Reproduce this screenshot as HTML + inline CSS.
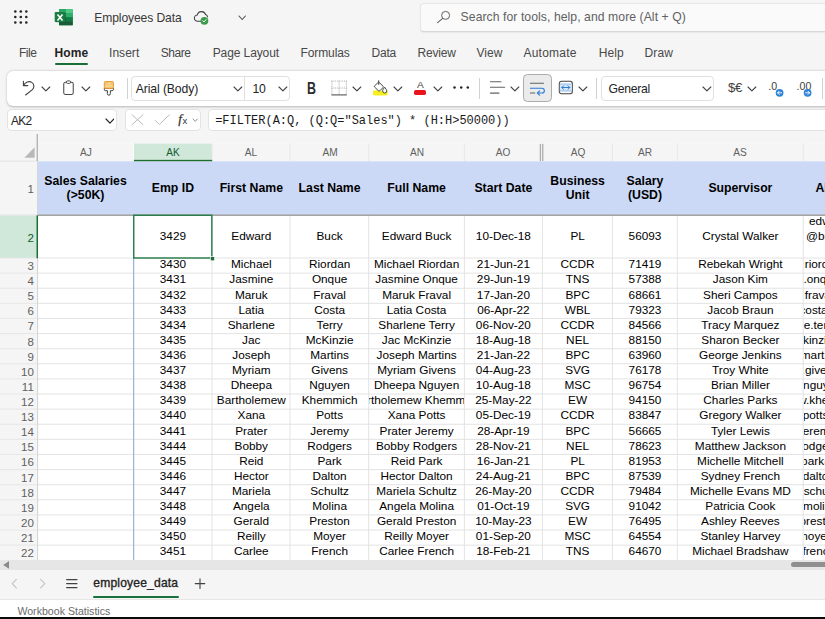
<!DOCTYPE html>
<html lang="en"><head><meta charset="utf-8"><title>Employees Data</title>
<style>
*{box-sizing:border-box;margin:0;padding:0}
html,body{width:825px;height:619px;overflow:hidden;background:#f5f5f5;font-family:"Liberation Sans",sans-serif;color:#242424}
#app{position:relative;width:825px;height:619px;overflow:hidden;background:#f5f5f5}
.abs{position:absolute}
.ui{font-family:"Liberation Sans",sans-serif;color:#242424;white-space:nowrap}
.cell{position:absolute;overflow:hidden;color:#000;font-size:11.8px;line-height:14px}
.cell span{position:absolute;white-space:nowrap;transform:translateX(-50%);text-align:center}
.ch{position:absolute;top:145.1px;height:14px;line-height:14px;text-align:center;font-size:11.5px;color:#616161;transform:translateX(-50%) scaleX(.88);white-space:nowrap}
.rn{position:absolute;left:0;width:33.8px;text-align:right;font-size:11.5px;line-height:14px;height:14px;color:#616161;white-space:nowrap}
.vl{position:absolute;width:1px;background:#e2e2e2}
.hl{position:absolute;height:1px;background:#e2e2e2}
.hc{position:absolute;font-weight:bold;font-size:12.25px;line-height:14.6px;text-align:center;color:#000;white-space:nowrap;transform:translate(-50%,-50%)}
</style></head><body><div id="app">

<svg class="abs" style="left:0;top:0" width="40" height="35" fill="#242424"><circle cx="15.3" cy="11.5" r="1.3"/><circle cx="15.3" cy="17" r="1.3"/><circle cx="15.3" cy="22.5" r="1.3"/><circle cx="20.8" cy="11.5" r="1.3"/><circle cx="20.8" cy="17" r="1.3"/><circle cx="20.8" cy="22.5" r="1.3"/><circle cx="26.3" cy="11.5" r="1.3"/><circle cx="26.3" cy="17" r="1.3"/><circle cx="26.3" cy="22.5" r="1.3"/></svg>
<svg class="abs" style="left:54px;top:8px" width="20" height="19" viewBox="0 0 20 19">
<rect x="5" y="1.1" width="13.8" height="16.2" rx="1" fill="#21a366"/>
<rect x="5" y="1.1" width="6.9" height="4.05" fill="#2aa862"/><rect x="11.9" y="1.1" width="6.9" height="4.05" fill="#52c987"/>
<rect x="5" y="5.15" width="6.9" height="4.05" fill="#16834a"/><rect x="11.9" y="5.15" width="6.9" height="4.05" fill="#33ad6a"/>
<rect x="5" y="9.2" width="6.9" height="4.05" fill="#185c37"/><rect x="11.9" y="9.2" width="6.9" height="4.05" fill="#107c41"/>
<rect x="5" y="13.25" width="13.8" height="4.05" fill="#185c37"/>
<rect x="1.4" y="4.6" width="10.3" height="9.8" rx="1" fill="#0b4f28" opacity=".35"/><rect x="0.7" y="4.1" width="10.4" height="10" rx="1" fill="#1a7d42"/>
<path d="M3.5 6.5 L8.5 12.5 M8.5 6.5 L3.5 12.5" stroke="#fff" stroke-width="1.6" fill="none"/>
</svg>
<div class="abs ui" style="left:94.2px;top:9.6px;line-height:16px;font-size:12.1px;letter-spacing:-0.091px;color:#383838;">Employees Data</div>
<svg class="abs" style="left:192px;top:9px" width="20" height="18" viewBox="0 0 20 18">
<path d="M9.6 12.2 H5.6 A3.1 3.1 0 0 1 5.3 6 A4.3 4.3 0 0 1 13.6 5.6 A3.3 3.3 0 0 1 15.6 8" fill="none" stroke="#424242" stroke-width="1.05" stroke-linecap="round"/>
<circle cx="12.4" cy="11.8" r="3.9" fill="#3a9c4b"/>
<path d="M10.7 11.8 L11.9 13 L14.1 10.6" fill="none" stroke="#fff" stroke-width="1" stroke-linecap="round" stroke-linejoin="round"/>
</svg>
<svg class="abs" style="left:238.0px;top:14.7px" width="8.4" height="5.5" viewBox="-1 -1 8.4 5.5"><path d="M0 0 L3.20 3.50 L6.40 0" fill="none" stroke="#505050" stroke-width="1.1" stroke-linecap="round" stroke-linejoin="round"/></svg>
<div class="abs" style="left:420px;top:3px;width:420px;height:29px;background:#fafafa;border:1px solid #e6e6e6;border-bottom-color:#d6d6d6;border-radius:4px;box-shadow:0 1px 1.5px rgba(0,0,0,.06)"></div>
<svg class="abs" style="left:436px;top:10px" width="16" height="14" viewBox="0 0 16 14">
<circle cx="9.6" cy="5.4" r="4" fill="none" stroke="#616161" stroke-width="1"/><path d="M6.7 8.4 L1.6 12.6" stroke="#616161" stroke-width="1.05" stroke-linecap="round"/></svg>
<div class="abs ui" style="left:460.6px;top:9.3px;line-height:16px;font-size:12.2px;letter-spacing:0.065px;color:#616161;">Search for tools, help, and more (Alt + Q)</div>
<div class="abs ui" style="left:18.9px;top:44.6px;line-height:16px;font-size:12.0px;letter-spacing:-0.459px;color:#484848;">File</div>
<div class="abs ui" style="left:109.0px;top:44.6px;line-height:16px;font-size:12.0px;letter-spacing:0.048px;color:#484848;">Insert</div>
<div class="abs ui" style="left:160.7px;top:44.6px;line-height:16px;font-size:12.0px;letter-spacing:-0.445px;color:#484848;">Share</div>
<div class="abs ui" style="left:212.7px;top:44.6px;line-height:16px;font-size:12.0px;letter-spacing:-0.099px;color:#484848;">Page Layout</div>
<div class="abs ui" style="left:300.4px;top:44.6px;line-height:16px;font-size:12.0px;letter-spacing:-0.076px;color:#484848;">Formulas</div>
<div class="abs ui" style="left:371.6px;top:44.6px;line-height:16px;font-size:12.0px;letter-spacing:-0.237px;color:#484848;">Data</div>
<div class="abs ui" style="left:417.5px;top:44.6px;line-height:16px;font-size:12.0px;letter-spacing:-0.191px;color:#484848;">Review</div>
<div class="abs ui" style="left:476.5px;top:44.6px;line-height:16px;font-size:12.0px;letter-spacing:0.051px;color:#484848;">View</div>
<div class="abs ui" style="left:523.4px;top:44.6px;line-height:16px;font-size:12.0px;letter-spacing:0.254px;color:#484848;">Automate</div>
<div class="abs ui" style="left:598.7px;top:44.6px;line-height:16px;font-size:12.0px;letter-spacing:0.080px;color:#484848;">Help</div>
<div class="abs ui" style="left:644.6px;top:44.6px;line-height:16px;font-size:12.0px;letter-spacing:0.099px;color:#484848;">Draw</div>
<div class="abs ui" style="left:54.5px;top:44.6px;line-height:16px;font-size:12.0px;letter-spacing:0.140px;color:#242424;font-weight:bold;">Home</div>
<div class="abs" style="left:54.5px;top:63.3px;width:33.7px;height:1.8px;background:#1a6f38;border-radius:1px"></div>
<div class="abs" style="left:6.6px;top:70.7px;width:830px;height:35.3px;background:#fff;border-radius:6px 0 0 6px;box-shadow:0 .8px 2.4px rgba(0,0,0,.26)"></div>
<svg class="abs" style="left:21px;top:79px" width="16" height="18" viewBox="0 0 16 18">
<path d="M2.4 2.2 V6.6 H6.8" fill="none" stroke="#424242" stroke-width="1.1" stroke-linecap="round" stroke-linejoin="round"/>
<path d="M2.6 6.4 C4.2 3.2 8 1.6 10.8 3.4 C13.6 5.2 13.4 8.6 11.4 10.6 L4.6 16" fill="none" stroke="#424242" stroke-width="1.1" stroke-linecap="round"/></svg>
<svg class="abs" style="left:41.2px;top:85.8px" width="9.8" height="5.9" viewBox="-1 -1 9.8 5.9"><path d="M0 0 L3.90 3.90 L7.80 0" fill="none" stroke="#424242" stroke-width="1.1" stroke-linecap="round" stroke-linejoin="round"/></svg>
<svg class="abs" style="left:62px;top:79px" width="14" height="18" viewBox="0 0 14 18">
<rect x="1.75" y="3.3" width="9.5" height="12.2" rx="1.7" fill="none" stroke="#4a4a4a" stroke-width="1.05"/>
<rect x="4.3" y="1.9" width="4.4" height="2.5" rx="1.25" fill="#fff" stroke="#4a4a4a" stroke-width="1"/></svg>
<svg class="abs" style="left:81.4px;top:85.8px" width="9.8" height="5.9" viewBox="-1 -1 9.8 5.9"><path d="M0 0 L3.90 3.90 L7.80 0" fill="none" stroke="#424242" stroke-width="1.1" stroke-linecap="round" stroke-linejoin="round"/></svg>
<svg class="abs" style="left:103px;top:79.6px" width="12" height="17" viewBox="0 0 12 17">
<path d="M1.3 8.3 H10.4 V9.4 A1.3 1.3 0 0 1 9.1 10.7 H7.4 V13.7 A1.5 1.5 0 0 1 4.4 13.7 V10.7 H2.6 A1.3 1.3 0 0 1 1.3 9.4 Z" fill="#fff" stroke="#424242" stroke-width="1"/>
<rect x="1.3" y="1.5" width="9.1" height="6.9" rx="1" fill="#f5c46e" stroke="#e8932c" stroke-width=".9"/>
<path d="M2.4 4.4 H5.2 V2.6 H7.6 V4.8 H9.3 V7.2 H2.4 Z" fill="#f8d896" opacity=".8"/></svg>
<div class="abs" style="left:127.0px;top:78px;width:1px;height:20.5px;background:#d1d1d1"></div>
<div class="abs" style="left:131.3px;top:76px;width:158.5px;height:24.6px;border:1px solid #e0e0e0;border-radius:4px;background:#fff"></div>
<div class="abs" style="left:244.3px;top:76.5px;width:1px;height:23.6px;background:#e0e0e0"></div>
<div class="abs ui" style="left:135.8px;top:80.6px;line-height:16px;font-size:12.2px;letter-spacing:-0.111px;color:#242424;">Arial (Body)</div>
<svg class="abs" style="left:232.9px;top:86.0px" width="9.8" height="5.9" viewBox="-1 -1 9.8 5.9"><path d="M0 0 L3.90 3.90 L7.80 0" fill="none" stroke="#424242" stroke-width="1.1" stroke-linecap="round" stroke-linejoin="round"/></svg>
<div class="abs ui" style="left:252.6px;top:80.6px;line-height:16px;font-size:12.2px;letter-spacing:-0.485px;color:#242424;">10</div>
<svg class="abs" style="left:278.0px;top:86.0px" width="9.8" height="5.9" viewBox="-1 -1 9.8 5.9"><path d="M0 0 L3.90 3.90 L7.80 0" fill="none" stroke="#424242" stroke-width="1.1" stroke-linecap="round" stroke-linejoin="round"/></svg>
<div class="abs ui" style="left:307.2px;top:79.6px;font-size:16.6px;line-height:18px;font-weight:bold;color:#2b2b2b;transform:scaleX(.75);transform-origin:left">B</div>
<svg class="abs" style="left:331px;top:80px" width="17" height="17" viewBox="0 0 17 17">
<path d="M.9 .7 V14.4 M8.1 .7 V14.4 M15.3 .7 V14.4 M.5 1.1 H15.8 M.5 8 H15.8" fill="none" stroke="#adadad" stroke-width="1" stroke-dasharray=".95 .85"/>
<path d="M.4 14.9 H15.8" stroke="#616161" stroke-width="1.2"/></svg>
<svg class="abs" style="left:352.4px;top:86.0px" width="9.8" height="5.9" viewBox="-1 -1 9.8 5.9"><path d="M0 0 L3.90 3.90 L7.80 0" fill="none" stroke="#424242" stroke-width="1.1" stroke-linecap="round" stroke-linejoin="round"/></svg>
<svg class="abs" style="left:372px;top:79px" width="17" height="18" viewBox="0 0 17 18">
<rect x="1" y="11.5" width="14.6" height="4.9" rx="1.3" fill="#f6ef1c"/>
<path d="M6.7 3.5 Q7.3 3.5 7.7 3.9 L10.9 7.1 Q11.7 7.9 10.9 8.7 L7.9 11.7 Q7.1 12.5 6.3 11.7 L2.6 8 Q2 7.4 2.6 6.8 L5.7 3.9 Q6.1 3.5 6.7 3.5 Z" fill="#fff" stroke="#424242" stroke-width="1" stroke-linejoin="round"/>
<path d="M6.7 1.7 V5.2" stroke="#424242" stroke-width="1.1" stroke-linecap="round"/>
<path d="M12.7 8.2 Q14.8 10.9 14.8 11.9 A2.1 2.1 0 0 1 10.6 11.9 Q10.6 10.9 12.7 8.2 Z" fill="#fff" stroke="#424242" stroke-width=".95"/></svg>
<svg class="abs" style="left:393.0px;top:86.0px" width="9.8" height="5.9" viewBox="-1 -1 9.8 5.9"><path d="M0 0 L3.90 3.90 L7.80 0" fill="none" stroke="#424242" stroke-width="1.1" stroke-linecap="round" stroke-linejoin="round"/></svg>
<div class="abs ui" style="left:417.1px;top:78.3px;font-size:9.7px;line-height:14px;color:#444;transform:scaleX(1.05);transform-origin:left">A</div>
<div class="abs" style="left:414.1px;top:90px;width:12.4px;height:5.4px;background:#e8131b;border-radius:1.7px"></div>
<svg class="abs" style="left:433.4px;top:86.0px" width="9.8" height="5.9" viewBox="-1 -1 9.8 5.9"><path d="M0 0 L3.90 3.90 L7.80 0" fill="none" stroke="#424242" stroke-width="1.1" stroke-linecap="round" stroke-linejoin="round"/></svg>
<svg class="abs" style="left:450px;top:84px" width="22" height="8" fill="#242424"><circle cx="4.5" cy="3.6" r="1.25"/><circle cx="11.2" cy="3.6" r="1.25"/><circle cx="17.8" cy="3.6" r="1.25"/></svg>
<div class="abs" style="left:479.0px;top:78px;width:1px;height:20.5px;background:#d1d1d1"></div>
<svg class="abs" style="left:489px;top:79px" width="18" height="17" viewBox="0 0 18 17">
<path d="M1.4 2.8 H12 M1.4 8.3 H15.6 M1.4 14.1 H10" stroke="#616161" stroke-width="1.05" stroke-linecap="round"/></svg>
<svg class="abs" style="left:509.8px;top:85.8px" width="9.8" height="5.9" viewBox="-1 -1 9.8 5.9"><path d="M0 0 L3.90 3.90 L7.80 0" fill="none" stroke="#424242" stroke-width="1.1" stroke-linecap="round" stroke-linejoin="round"/></svg>
<div class="abs" style="left:523.4px;top:74.1px;width:28.5px;height:27.5px;background:#ebebeb;border:1px solid #ababab;border-radius:4.5px"></div>
<svg class="abs" style="left:529.3px;top:79.5px" width="18" height="17" viewBox="0 0 18 17">
<path d="M1.4 3.2 H14.5 M1.4 13 H5.8" stroke="#616161" stroke-width="1.1" stroke-linecap="round"/>
<path d="M1.4 8.3 H13 A2.35 2.35 0 0 1 13 13 H8.6" fill="none" stroke="#2b7cd3" stroke-width="1.1" stroke-linecap="round"/>
<path d="M10.6 10.8 L8.4 13 L10.6 15.2" fill="none" stroke="#2b7cd3" stroke-width="1.1" stroke-linecap="round" stroke-linejoin="round"/></svg>
<svg class="abs" style="left:558px;top:80px" width="16" height="15" viewBox="0 0 16 15">
<rect x="1.3" y="1.3" width="13" height="12.4" rx="2.2" fill="#fff" stroke="#424242" stroke-width="1.05"/>
<rect x="1.9" y="4" width="11.8" height="7" fill="#d6e6f7"/>
<path d="M1.9 4 H13.7 M1.9 11 H13.7" stroke="#7fb0e3" stroke-width=".8"/>
<path d="M3.8 7.5 H11.8 M5.6 5.7 L3.8 7.5 L5.6 9.3 M10 5.7 L11.8 7.5 L10 9.3" fill="none" stroke="#2b7cd3" stroke-width="1" stroke-linecap="round" stroke-linejoin="round"/></svg>
<svg class="abs" style="left:578.4px;top:86.0px" width="9.8" height="5.9" viewBox="-1 -1 9.8 5.9"><path d="M0 0 L3.90 3.90 L7.80 0" fill="none" stroke="#424242" stroke-width="1.1" stroke-linecap="round" stroke-linejoin="round"/></svg>
<div class="abs" style="left:596.0px;top:78px;width:1px;height:20.5px;background:#d1d1d1"></div>
<div class="abs" style="left:600.5px;top:76px;width:113.8px;height:24.6px;border:1px solid #e0e0e0;border-radius:4px;background:#fff"></div>
<div class="abs ui" style="left:608.6px;top:80.6px;line-height:16px;font-size:12.2px;letter-spacing:-0.286px;color:#242424;">General</div>
<svg class="abs" style="left:702.3px;top:86.0px" width="9.8" height="5.9" viewBox="-1 -1 9.8 5.9"><path d="M0 0 L3.90 3.90 L7.80 0" fill="none" stroke="#424242" stroke-width="1.1" stroke-linecap="round" stroke-linejoin="round"/></svg>
<div class="abs ui" style="left:728.0px;top:80.2px;line-height:16px;font-size:13.2px;letter-spacing:-0.341px;color:#424242;">$€</div>
<svg class="abs" style="left:747.2px;top:86.0px" width="9.8" height="5.9" viewBox="-1 -1 9.8 5.9"><path d="M0 0 L3.90 3.90 L7.80 0" fill="none" stroke="#424242" stroke-width="1.1" stroke-linecap="round" stroke-linejoin="round"/></svg>
<div class="abs ui" style="left:768.3px;top:78.4px;line-height:16px;font-size:10.6px;letter-spacing:-0.070px;color:#424242;">.0</div>
<svg class="abs" style="left:775px;top:88px" width="10" height="10" viewBox="0 0 10 10"><circle cx="4.6" cy="4.8" r="3.9" fill="#2f84d6"/><path d="M2.6 4.8 H6.6 M4.2 3.2 L2.6 4.8 L4.2 6.4" fill="none" stroke="#fff" stroke-width=".9" stroke-linecap="round" stroke-linejoin="round"/></svg>
<div class="abs ui" style="left:796.6px;top:78.4px;line-height:16px;font-size:10.6px;letter-spacing:-0.012px;color:#424242;">.00</div>
<svg class="abs" style="left:803.4px;top:88px" width="10" height="10" viewBox="0 0 10 10"><circle cx="4.6" cy="4.8" r="3.9" fill="#2f84d6"/><path d="M2.6 4.8 H6.6 M5 3.2 L6.6 4.8 L5 6.4" fill="none" stroke="#fff" stroke-width=".9" stroke-linecap="round" stroke-linejoin="round"/></svg>
<div class="abs" style="left:822.0px;top:78px;width:1px;height:20.5px;background:#d1d1d1"></div>
<div class="abs" style="left:7.4px;top:109px;width:109.4px;height:22px;border:1px solid #e3e3e3;border-radius:4px;background:#fff"></div>
<div class="abs ui" style="left:11.0px;top:112.6px;line-height:16px;font-size:11.9px;letter-spacing:-0.665px;color:#242424;">AK2</div>
<svg class="abs" style="left:104.6px;top:118.2px" width="9.9" height="6.1" viewBox="-1 -1 9.9 6.1"><path d="M0 0 L3.95 4.10 L7.90 0" fill="none" stroke="#242424" stroke-width="1.15" stroke-linecap="round" stroke-linejoin="round"/></svg>
<div class="abs" style="left:124.6px;top:109px;width:76.2px;height:22px;border:1px solid #e3e3e3;border-radius:4px;background:#fff"></div>
<svg class="abs" style="left:130px;top:113px" width="42" height="14" viewBox="0 0 42 14">
<path d="M2 1.8 L13 11.6 M13 1.8 L2 11.6" stroke="#bdbdbd" stroke-width="1" stroke-linecap="round"/>
<path d="M25.2 7.4 L29.4 11.4 L39.4 1.8" fill="none" stroke="#bdbdbd" stroke-width="1" stroke-linecap="round" stroke-linejoin="round"/></svg>
<div class="abs ui" style="left:178.2px;top:111.2px;font-size:13.2px;line-height:16px;font-style:italic;color:#333;-webkit-text-stroke:.25px #333;font-family:'Liberation Serif',serif">f</div>
<div class="abs ui" style="left:182.6px;top:116.4px;font-size:9.4px;line-height:10px;color:#333">x</div>
<svg class="abs" style="left:192.4px;top:118.1px" width="6.4" height="4.4" viewBox="-1 -1 6.4 4.4"><path d="M0 0 L2.20 2.40 L4.40 0" fill="none" stroke="#8a8a8a" stroke-width="0.9" stroke-linecap="round" stroke-linejoin="round"/></svg>
<div class="abs" style="left:208px;top:109px;width:640px;height:22px;border:1px solid #e3e3e3;border-radius:4px;background:#fff"></div>
<div class="abs" style="left:215.2px;top:111.6px;font-family:'Liberation Mono',monospace;font-size:11.97px;line-height:16px;color:#1a1a1a;white-space:pre;margin-top:1.1px">=FILTER(A:Q, (Q:Q="Sales") * (H:H&gt;50000))</div>
<svg class="abs" style="left:0;top:130px" width="825" height="430" viewBox="0 130 825 430"><rect x="0" y="143.6" width="825" height="416.40" fill="#fff"/><rect x="0" y="143.6" width="825" height="17.40" fill="#f5f5f5"/><rect x="0" y="143.6" width="37.6" height="416.40" fill="#f5f5f5"/><rect x="134" y="143.6" width="78" height="16.40" fill="#d0e8d9"/><rect x="0" y="215.50" width="36.8" height="42.54" fill="#d0e8d9"/><path d="M133.6 214.6 V560.0" stroke="#e1e1e1" stroke-width=".95"/><path d="M212.0 214.6 V560.0" stroke="#e1e1e1" stroke-width=".95"/><path d="M290.0 214.6 V560.0" stroke="#e1e1e1" stroke-width=".95"/><path d="M368.7 214.6 V560.0" stroke="#e1e1e1" stroke-width=".95"/><path d="M464.4 214.6 V560.0" stroke="#e1e1e1" stroke-width=".95"/><path d="M542.4 214.6 V560.0" stroke="#e1e1e1" stroke-width=".95"/><path d="M612.4 214.6 V560.0" stroke="#e1e1e1" stroke-width=".95"/><path d="M677.3 214.6 V560.0" stroke="#e1e1e1" stroke-width=".95"/><path d="M803.2 214.6 V560.0" stroke="#e1e1e1" stroke-width=".95"/><path d="M37.6 258.04 H825" stroke="#e1e1e1" stroke-width=".95"/><path d="M0 258.04 H37.6" stroke="#e6e6e6" stroke-width=".95"/><path d="M37.6 273.15 H825" stroke="#e1e1e1" stroke-width=".95"/><path d="M0 273.15 H37.6" stroke="#e6e6e6" stroke-width=".95"/><path d="M37.6 288.26 H825" stroke="#e1e1e1" stroke-width=".95"/><path d="M0 288.26 H37.6" stroke="#e6e6e6" stroke-width=".95"/><path d="M37.6 303.37 H825" stroke="#e1e1e1" stroke-width=".95"/><path d="M0 303.37 H37.6" stroke="#e6e6e6" stroke-width=".95"/><path d="M37.6 318.48 H825" stroke="#e1e1e1" stroke-width=".95"/><path d="M0 318.48 H37.6" stroke="#e6e6e6" stroke-width=".95"/><path d="M37.6 333.59 H825" stroke="#e1e1e1" stroke-width=".95"/><path d="M0 333.59 H37.6" stroke="#e6e6e6" stroke-width=".95"/><path d="M37.6 348.70 H825" stroke="#e1e1e1" stroke-width=".95"/><path d="M0 348.70 H37.6" stroke="#e6e6e6" stroke-width=".95"/><path d="M37.6 363.81 H825" stroke="#e1e1e1" stroke-width=".95"/><path d="M0 363.81 H37.6" stroke="#e6e6e6" stroke-width=".95"/><path d="M37.6 378.92 H825" stroke="#e1e1e1" stroke-width=".95"/><path d="M0 378.92 H37.6" stroke="#e6e6e6" stroke-width=".95"/><path d="M37.6 394.03 H825" stroke="#e1e1e1" stroke-width=".95"/><path d="M0 394.03 H37.6" stroke="#e6e6e6" stroke-width=".95"/><path d="M37.6 409.14 H825" stroke="#e1e1e1" stroke-width=".95"/><path d="M0 409.14 H37.6" stroke="#e6e6e6" stroke-width=".95"/><path d="M37.6 424.25 H825" stroke="#e1e1e1" stroke-width=".95"/><path d="M0 424.25 H37.6" stroke="#e6e6e6" stroke-width=".95"/><path d="M37.6 439.36 H825" stroke="#e1e1e1" stroke-width=".95"/><path d="M0 439.36 H37.6" stroke="#e6e6e6" stroke-width=".95"/><path d="M37.6 454.47 H825" stroke="#e1e1e1" stroke-width=".95"/><path d="M0 454.47 H37.6" stroke="#e6e6e6" stroke-width=".95"/><path d="M37.6 469.58 H825" stroke="#e1e1e1" stroke-width=".95"/><path d="M0 469.58 H37.6" stroke="#e6e6e6" stroke-width=".95"/><path d="M37.6 484.69 H825" stroke="#e1e1e1" stroke-width=".95"/><path d="M0 484.69 H37.6" stroke="#e6e6e6" stroke-width=".95"/><path d="M37.6 499.80 H825" stroke="#e1e1e1" stroke-width=".95"/><path d="M0 499.80 H37.6" stroke="#e6e6e6" stroke-width=".95"/><path d="M37.6 514.91 H825" stroke="#e1e1e1" stroke-width=".95"/><path d="M0 514.91 H37.6" stroke="#e6e6e6" stroke-width=".95"/><path d="M37.6 530.02 H825" stroke="#e1e1e1" stroke-width=".95"/><path d="M0 530.02 H37.6" stroke="#e6e6e6" stroke-width=".95"/><path d="M37.6 545.13 H825" stroke="#e1e1e1" stroke-width=".95"/><path d="M0 545.13 H37.6" stroke="#e6e6e6" stroke-width=".95"/><path d="M212.0 143.9 V161.0" stroke="#e6e6e6" stroke-width=".95"/><path d="M290.0 143.9 V161.0" stroke="#e6e6e6" stroke-width=".95"/><path d="M368.7 143.9 V161.0" stroke="#e6e6e6" stroke-width=".95"/><path d="M464.4 143.9 V161.0" stroke="#e6e6e6" stroke-width=".95"/><path d="M542.4 143.9 V161.0" stroke="#e6e6e6" stroke-width=".95"/><path d="M612.4 143.9 V161.0" stroke="#e6e6e6" stroke-width=".95"/><path d="M677.3 143.9 V161.0" stroke="#e6e6e6" stroke-width=".95"/><path d="M803.2 143.9 V161.0" stroke="#e6e6e6" stroke-width=".95"/><path d="M133.4 143.9 V161.0" stroke="#fcfcfc" stroke-width="1"/><path d="M37.6 161.0 V560.0" stroke="#d2d2d2" stroke-width="1"/><path d="M0 161.2 H37.6" stroke="#e2e2e2" stroke-width=".95"/><path d="M0 215.1 H37.6" stroke="#e2e2e2" stroke-width=".95"/><path d="M37.2 134 V161.0" stroke="#9a9a9a" stroke-width="1"/><path d="M540.3 143.9 V161.0 M542.8 143.9 V161.0" stroke="#9a9a9a" stroke-width="1"/><rect x="37.9" y="161.3" width="790" height="53.30" fill="#cbd9f6"/><rect x="37.9" y="214.50" width="790" height="1.3" fill="#8e8e8e"/><path d="M34.6 147.3 V157.8 H24.4 Z" fill="#b8b8b8"/><rect x="133.9" y="159.85" width="78.3" height="1.4" fill="#1c6e33"/><rect x="36.5" y="215.40" width="1.5" height="42.84" fill="#1c6e33"/><path d="M133.7 258.04 V560.0" stroke="#8ea5d6" stroke-width="1"/><rect x="133.75" y="215.25" width="78.1" height="42.74" fill="none" stroke="#2a7d4c" stroke-width="1.45"/><rect x="210.2" y="256.4" width="4.4" height="4.4" fill="#fff"/><rect x="210.8" y="257" width="3.4" height="3.4" fill="#1c6e33"/></svg>
<div class="ch" style="left:85.5px;color:#616161">AJ</div>
<div class="ch" style="left:172.9px;color:#0e5c2f">AK</div>
<div class="ch" style="left:251.3px;color:#616161">AL</div>
<div class="ch" style="left:329.6px;color:#616161">AM</div>
<div class="ch" style="left:416.6px;color:#616161">AN</div>
<div class="ch" style="left:503.4px;color:#616161">AO</div>
<div class="ch" style="left:577.6px;color:#616161">AQ</div>
<div class="ch" style="left:645.0px;color:#616161">AR</div>
<div class="ch" style="left:740.4px;color:#616161">AS</div>
<div class="ch" style="left:842.5px;color:#616161">AT</div>
<div class="rn" style="top:181.90px;color:#616161">1</div>
<div class="rn" style="top:230.67px;color:#0e5c2f">2</div>
<div class="rn" style="top:259.00px;color:#616161">3</div>
<div class="rn" style="top:274.11px;color:#616161">4</div>
<div class="rn" style="top:289.22px;color:#616161">5</div>
<div class="rn" style="top:304.33px;color:#616161">6</div>
<div class="rn" style="top:319.44px;color:#616161">7</div>
<div class="rn" style="top:334.55px;color:#616161">8</div>
<div class="rn" style="top:349.66px;color:#616161">9</div>
<div class="rn" style="top:364.77px;color:#616161">10</div>
<div class="rn" style="top:379.88px;color:#616161">11</div>
<div class="rn" style="top:394.99px;color:#616161">12</div>
<div class="rn" style="top:410.10px;color:#616161">13</div>
<div class="rn" style="top:425.21px;color:#616161">14</div>
<div class="rn" style="top:440.32px;color:#616161">15</div>
<div class="rn" style="top:455.43px;color:#616161">16</div>
<div class="rn" style="top:470.54px;color:#616161">17</div>
<div class="rn" style="top:485.65px;color:#616161">18</div>
<div class="rn" style="top:500.76px;color:#616161">19</div>
<div class="rn" style="top:515.87px;color:#616161">20</div>
<div class="rn" style="top:530.98px;color:#616161">21</div>
<div class="rn" style="top:546.08px;color:#616161">22</div>
<div class="hc" style="left:85.5px;top:188.5px">Sales Salaries<br>(&gt;50K)</div>
<div class="hc" style="left:172.9px;top:187.5px">Emp ID</div>
<div class="hc" style="left:251.3px;top:187.5px">First Name</div>
<div class="hc" style="left:329.6px;top:187.5px">Last Name</div>
<div class="hc" style="left:416.6px;top:187.5px">Full Name</div>
<div class="hc" style="left:503.4px;top:187.5px">Start Date</div>
<div class="hc" style="left:577.6px;top:188.5px">Business<br>Unit</div>
<div class="hc" style="left:645.0px;top:188.5px">Salary<br>(USD)</div>
<div class="hc" style="left:740.4px;top:187.5px">Supervisor</div>
<div class="hc" style="left:840.6px;top:187.5px">ADEmail</div>
<div class="cell" style="left:134px;top:215.60px;width:78px;height:41.94px"><span style="left:38.9px;top:13.61px">3429</span></div>
<div class="cell" style="left:213px;top:215.60px;width:77px;height:41.94px"><span style="left:38.3px;top:13.61px">Edward</span></div>
<div class="cell" style="left:291px;top:215.60px;width:77px;height:41.94px"><span style="left:38.6px;top:13.61px">Buck</span></div>
<div class="cell" style="left:369px;top:215.60px;width:95px;height:41.94px"><span style="left:47.6px;top:13.61px">Edward Buck</span></div>
<div class="cell" style="left:465px;top:215.60px;width:77px;height:41.94px"><span style="left:38.4px;top:13.61px">10-Dec-18</span></div>
<div class="cell" style="left:543px;top:215.60px;width:69px;height:41.94px"><span style="left:34.6px;top:13.61px">PL</span></div>
<div class="cell" style="left:613px;top:215.60px;width:64px;height:41.94px"><span style="left:32.0px;top:13.61px">56093</span></div>
<div class="cell" style="left:678px;top:215.60px;width:125px;height:41.94px"><span style="left:62.4px;top:13.61px">Crystal Walker</span></div>
<div class="cell" style="left:804px;top:215.60px;width:22px;height:41.94px;line-height:15.3px"><span style="left:38.5px;top:-1.54px">edward.buck<br>@bilearner.co<br>m</span></div>
<div class="cell" style="left:134px;top:258.54px;width:78px;height:14.11px"><span style="left:38.9px;top:-1.23px">3430</span></div>
<div class="cell" style="left:213px;top:258.54px;width:77px;height:14.11px"><span style="left:38.3px;top:-1.23px">Michael</span></div>
<div class="cell" style="left:291px;top:258.54px;width:77px;height:14.11px"><span style="left:38.6px;top:-1.23px">Riordan</span></div>
<div class="cell" style="left:369px;top:258.54px;width:95px;height:14.11px"><span style="left:47.6px;top:-1.23px">Michael Riordan</span></div>
<div class="cell" style="left:465px;top:258.54px;width:77px;height:14.11px"><span style="left:38.4px;top:-1.23px">21-Jun-21</span></div>
<div class="cell" style="left:543px;top:258.54px;width:69px;height:14.11px"><span style="left:34.6px;top:-1.23px">CCDR</span></div>
<div class="cell" style="left:613px;top:258.54px;width:64px;height:14.11px"><span style="left:32.0px;top:-1.23px">71419</span></div>
<div class="cell" style="left:678px;top:258.54px;width:125px;height:14.11px"><span style="left:62.4px;top:-1.23px">Rebekah Wright</span></div>
<div class="cell" style="left:804px;top:258.54px;width:22px;height:14.11px"><span style="left:38.5px;top:-1.23px">michael.riordan@bilearner.com</span></div>
<div class="cell" style="left:134px;top:273.65px;width:78px;height:14.11px"><span style="left:38.9px;top:-1.23px">3431</span></div>
<div class="cell" style="left:213px;top:273.65px;width:77px;height:14.11px"><span style="left:38.3px;top:-1.23px">Jasmine</span></div>
<div class="cell" style="left:291px;top:273.65px;width:77px;height:14.11px"><span style="left:38.6px;top:-1.23px">Onque</span></div>
<div class="cell" style="left:369px;top:273.65px;width:95px;height:14.11px"><span style="left:47.6px;top:-1.23px">Jasmine Onque</span></div>
<div class="cell" style="left:465px;top:273.65px;width:77px;height:14.11px"><span style="left:38.4px;top:-1.23px">29-Jun-19</span></div>
<div class="cell" style="left:543px;top:273.65px;width:69px;height:14.11px"><span style="left:34.6px;top:-1.23px">TNS</span></div>
<div class="cell" style="left:613px;top:273.65px;width:64px;height:14.11px"><span style="left:32.0px;top:-1.23px">57388</span></div>
<div class="cell" style="left:678px;top:273.65px;width:125px;height:14.11px"><span style="left:62.4px;top:-1.23px">Jason Kim</span></div>
<div class="cell" style="left:804px;top:273.65px;width:22px;height:14.11px"><span style="left:38.5px;top:-1.23px">jasmine.onque@bilearner.com</span></div>
<div class="cell" style="left:134px;top:288.76px;width:78px;height:14.11px"><span style="left:38.9px;top:-1.23px">3432</span></div>
<div class="cell" style="left:213px;top:288.76px;width:77px;height:14.11px"><span style="left:38.3px;top:-1.23px">Maruk</span></div>
<div class="cell" style="left:291px;top:288.76px;width:77px;height:14.11px"><span style="left:38.6px;top:-1.23px">Fraval</span></div>
<div class="cell" style="left:369px;top:288.76px;width:95px;height:14.11px"><span style="left:47.6px;top:-1.23px">Maruk Fraval</span></div>
<div class="cell" style="left:465px;top:288.76px;width:77px;height:14.11px"><span style="left:38.4px;top:-1.23px">17-Jan-20</span></div>
<div class="cell" style="left:543px;top:288.76px;width:69px;height:14.11px"><span style="left:34.6px;top:-1.23px">BPC</span></div>
<div class="cell" style="left:613px;top:288.76px;width:64px;height:14.11px"><span style="left:32.0px;top:-1.23px">68661</span></div>
<div class="cell" style="left:678px;top:288.76px;width:125px;height:14.11px"><span style="left:62.4px;top:-1.23px">Sheri Campos</span></div>
<div class="cell" style="left:804px;top:288.76px;width:22px;height:14.11px"><span style="left:38.5px;top:-1.23px">maruk.fraval@bilearner.com</span></div>
<div class="cell" style="left:134px;top:303.87px;width:78px;height:14.11px"><span style="left:38.9px;top:-1.23px">3433</span></div>
<div class="cell" style="left:213px;top:303.87px;width:77px;height:14.11px"><span style="left:38.3px;top:-1.23px">Latia</span></div>
<div class="cell" style="left:291px;top:303.87px;width:77px;height:14.11px"><span style="left:38.6px;top:-1.23px">Costa</span></div>
<div class="cell" style="left:369px;top:303.87px;width:95px;height:14.11px"><span style="left:47.6px;top:-1.23px">Latia Costa</span></div>
<div class="cell" style="left:465px;top:303.87px;width:77px;height:14.11px"><span style="left:38.4px;top:-1.23px">06-Apr-22</span></div>
<div class="cell" style="left:543px;top:303.87px;width:69px;height:14.11px"><span style="left:34.6px;top:-1.23px">WBL</span></div>
<div class="cell" style="left:613px;top:303.87px;width:64px;height:14.11px"><span style="left:32.0px;top:-1.23px">79323</span></div>
<div class="cell" style="left:678px;top:303.87px;width:125px;height:14.11px"><span style="left:62.4px;top:-1.23px">Jacob Braun</span></div>
<div class="cell" style="left:804px;top:303.87px;width:22px;height:14.11px"><span style="left:38.5px;top:-1.23px">latia.costa@bilearner.com</span></div>
<div class="cell" style="left:134px;top:318.98px;width:78px;height:14.11px"><span style="left:38.9px;top:-1.23px">3434</span></div>
<div class="cell" style="left:213px;top:318.98px;width:77px;height:14.11px"><span style="left:38.3px;top:-1.23px">Sharlene</span></div>
<div class="cell" style="left:291px;top:318.98px;width:77px;height:14.11px"><span style="left:38.6px;top:-1.23px">Terry</span></div>
<div class="cell" style="left:369px;top:318.98px;width:95px;height:14.11px"><span style="left:47.6px;top:-1.23px">Sharlene Terry</span></div>
<div class="cell" style="left:465px;top:318.98px;width:77px;height:14.11px"><span style="left:38.4px;top:-1.23px">06-Nov-20</span></div>
<div class="cell" style="left:543px;top:318.98px;width:69px;height:14.11px"><span style="left:34.6px;top:-1.23px">CCDR</span></div>
<div class="cell" style="left:613px;top:318.98px;width:64px;height:14.11px"><span style="left:32.0px;top:-1.23px">84566</span></div>
<div class="cell" style="left:678px;top:318.98px;width:125px;height:14.11px"><span style="left:62.4px;top:-1.23px">Tracy Marquez</span></div>
<div class="cell" style="left:804px;top:318.98px;width:22px;height:14.11px"><span style="left:38.5px;top:-1.23px">sharlene.terry@bilearner.com</span></div>
<div class="cell" style="left:134px;top:334.09px;width:78px;height:14.11px"><span style="left:38.9px;top:-1.23px">3435</span></div>
<div class="cell" style="left:213px;top:334.09px;width:77px;height:14.11px"><span style="left:38.3px;top:-1.23px">Jac</span></div>
<div class="cell" style="left:291px;top:334.09px;width:77px;height:14.11px"><span style="left:38.6px;top:-1.23px">McKinzie</span></div>
<div class="cell" style="left:369px;top:334.09px;width:95px;height:14.11px"><span style="left:47.6px;top:-1.23px">Jac McKinzie</span></div>
<div class="cell" style="left:465px;top:334.09px;width:77px;height:14.11px"><span style="left:38.4px;top:-1.23px">18-Aug-18</span></div>
<div class="cell" style="left:543px;top:334.09px;width:69px;height:14.11px"><span style="left:34.6px;top:-1.23px">NEL</span></div>
<div class="cell" style="left:613px;top:334.09px;width:64px;height:14.11px"><span style="left:32.0px;top:-1.23px">88150</span></div>
<div class="cell" style="left:678px;top:334.09px;width:125px;height:14.11px"><span style="left:62.4px;top:-1.23px">Sharon Becker</span></div>
<div class="cell" style="left:804px;top:334.09px;width:22px;height:14.11px"><span style="left:38.5px;top:-1.23px">jac.mckinzie@bilearner.com</span></div>
<div class="cell" style="left:134px;top:349.20px;width:78px;height:14.11px"><span style="left:38.9px;top:-1.23px">3436</span></div>
<div class="cell" style="left:213px;top:349.20px;width:77px;height:14.11px"><span style="left:38.3px;top:-1.23px">Joseph</span></div>
<div class="cell" style="left:291px;top:349.20px;width:77px;height:14.11px"><span style="left:38.6px;top:-1.23px">Martins</span></div>
<div class="cell" style="left:369px;top:349.20px;width:95px;height:14.11px"><span style="left:47.6px;top:-1.23px">Joseph Martins</span></div>
<div class="cell" style="left:465px;top:349.20px;width:77px;height:14.11px"><span style="left:38.4px;top:-1.23px">21-Jan-22</span></div>
<div class="cell" style="left:543px;top:349.20px;width:69px;height:14.11px"><span style="left:34.6px;top:-1.23px">BPC</span></div>
<div class="cell" style="left:613px;top:349.20px;width:64px;height:14.11px"><span style="left:32.0px;top:-1.23px">63960</span></div>
<div class="cell" style="left:678px;top:349.20px;width:125px;height:14.11px"><span style="left:62.4px;top:-1.23px">George Jenkins</span></div>
<div class="cell" style="left:804px;top:349.20px;width:22px;height:14.11px"><span style="left:38.5px;top:-1.23px">joseph.martins@bilearner.com</span></div>
<div class="cell" style="left:134px;top:364.31px;width:78px;height:14.11px"><span style="left:38.9px;top:-1.23px">3437</span></div>
<div class="cell" style="left:213px;top:364.31px;width:77px;height:14.11px"><span style="left:38.3px;top:-1.23px">Myriam</span></div>
<div class="cell" style="left:291px;top:364.31px;width:77px;height:14.11px"><span style="left:38.6px;top:-1.23px">Givens</span></div>
<div class="cell" style="left:369px;top:364.31px;width:95px;height:14.11px"><span style="left:47.6px;top:-1.23px">Myriam Givens</span></div>
<div class="cell" style="left:465px;top:364.31px;width:77px;height:14.11px"><span style="left:38.4px;top:-1.23px">04-Aug-23</span></div>
<div class="cell" style="left:543px;top:364.31px;width:69px;height:14.11px"><span style="left:34.6px;top:-1.23px">SVG</span></div>
<div class="cell" style="left:613px;top:364.31px;width:64px;height:14.11px"><span style="left:32.0px;top:-1.23px">76178</span></div>
<div class="cell" style="left:678px;top:364.31px;width:125px;height:14.11px"><span style="left:62.4px;top:-1.23px">Troy White</span></div>
<div class="cell" style="left:804px;top:364.31px;width:22px;height:14.11px"><span style="left:38.5px;top:-1.23px">myriam.givens@bilearner.com</span></div>
<div class="cell" style="left:134px;top:379.42px;width:78px;height:14.11px"><span style="left:38.9px;top:-1.23px">3438</span></div>
<div class="cell" style="left:213px;top:379.42px;width:77px;height:14.11px"><span style="left:38.3px;top:-1.23px">Dheepa</span></div>
<div class="cell" style="left:291px;top:379.42px;width:77px;height:14.11px"><span style="left:38.6px;top:-1.23px">Nguyen</span></div>
<div class="cell" style="left:369px;top:379.42px;width:95px;height:14.11px"><span style="left:47.6px;top:-1.23px">Dheepa Nguyen</span></div>
<div class="cell" style="left:465px;top:379.42px;width:77px;height:14.11px"><span style="left:38.4px;top:-1.23px">10-Aug-18</span></div>
<div class="cell" style="left:543px;top:379.42px;width:69px;height:14.11px"><span style="left:34.6px;top:-1.23px">MSC</span></div>
<div class="cell" style="left:613px;top:379.42px;width:64px;height:14.11px"><span style="left:32.0px;top:-1.23px">96754</span></div>
<div class="cell" style="left:678px;top:379.42px;width:125px;height:14.11px"><span style="left:62.4px;top:-1.23px">Brian Miller</span></div>
<div class="cell" style="left:804px;top:379.42px;width:22px;height:14.11px"><span style="left:38.5px;top:-1.23px">dheepa.nguyen@bilearner.com</span></div>
<div class="cell" style="left:134px;top:394.53px;width:78px;height:14.11px"><span style="left:38.9px;top:-1.23px">3439</span></div>
<div class="cell" style="left:213px;top:394.53px;width:77px;height:14.11px"><span style="left:38.3px;top:-1.23px">Bartholemew</span></div>
<div class="cell" style="left:291px;top:394.53px;width:77px;height:14.11px"><span style="left:38.6px;top:-1.23px">Khemmich</span></div>
<div class="cell" style="left:369px;top:394.53px;width:95px;height:14.11px"><span style="left:47.6px;top:-1.23px">Bartholemew Khemmich</span></div>
<div class="cell" style="left:465px;top:394.53px;width:77px;height:14.11px"><span style="left:38.4px;top:-1.23px">25-May-22</span></div>
<div class="cell" style="left:543px;top:394.53px;width:69px;height:14.11px"><span style="left:34.6px;top:-1.23px">EW</span></div>
<div class="cell" style="left:613px;top:394.53px;width:64px;height:14.11px"><span style="left:32.0px;top:-1.23px">94150</span></div>
<div class="cell" style="left:678px;top:394.53px;width:125px;height:14.11px"><span style="left:62.4px;top:-1.23px">Charles Parks</span></div>
<div class="cell" style="left:804px;top:394.53px;width:22px;height:14.11px"><span style="left:38.5px;top:-1.23px">bartholemew.khemmich@bilearner.com</span></div>
<div class="cell" style="left:134px;top:409.64px;width:78px;height:14.11px"><span style="left:38.9px;top:-1.23px">3440</span></div>
<div class="cell" style="left:213px;top:409.64px;width:77px;height:14.11px"><span style="left:38.3px;top:-1.23px">Xana</span></div>
<div class="cell" style="left:291px;top:409.64px;width:77px;height:14.11px"><span style="left:38.6px;top:-1.23px">Potts</span></div>
<div class="cell" style="left:369px;top:409.64px;width:95px;height:14.11px"><span style="left:47.6px;top:-1.23px">Xana Potts</span></div>
<div class="cell" style="left:465px;top:409.64px;width:77px;height:14.11px"><span style="left:38.4px;top:-1.23px">05-Dec-19</span></div>
<div class="cell" style="left:543px;top:409.64px;width:69px;height:14.11px"><span style="left:34.6px;top:-1.23px">CCDR</span></div>
<div class="cell" style="left:613px;top:409.64px;width:64px;height:14.11px"><span style="left:32.0px;top:-1.23px">83847</span></div>
<div class="cell" style="left:678px;top:409.64px;width:125px;height:14.11px"><span style="left:62.4px;top:-1.23px">Gregory Walker</span></div>
<div class="cell" style="left:804px;top:409.64px;width:22px;height:14.11px"><span style="left:38.5px;top:-1.23px">xana.potts@bilearner.com</span></div>
<div class="cell" style="left:134px;top:424.75px;width:78px;height:14.11px"><span style="left:38.9px;top:-1.23px">3441</span></div>
<div class="cell" style="left:213px;top:424.75px;width:77px;height:14.11px"><span style="left:38.3px;top:-1.23px">Prater</span></div>
<div class="cell" style="left:291px;top:424.75px;width:77px;height:14.11px"><span style="left:38.6px;top:-1.23px">Jeremy</span></div>
<div class="cell" style="left:369px;top:424.75px;width:95px;height:14.11px"><span style="left:47.6px;top:-1.23px">Prater Jeremy</span></div>
<div class="cell" style="left:465px;top:424.75px;width:77px;height:14.11px"><span style="left:38.4px;top:-1.23px">28-Apr-19</span></div>
<div class="cell" style="left:543px;top:424.75px;width:69px;height:14.11px"><span style="left:34.6px;top:-1.23px">BPC</span></div>
<div class="cell" style="left:613px;top:424.75px;width:64px;height:14.11px"><span style="left:32.0px;top:-1.23px">56665</span></div>
<div class="cell" style="left:678px;top:424.75px;width:125px;height:14.11px"><span style="left:62.4px;top:-1.23px">Tyler Lewis</span></div>
<div class="cell" style="left:804px;top:424.75px;width:22px;height:14.11px"><span style="left:38.5px;top:-1.23px">prater.jeremy@bilearner.com</span></div>
<div class="cell" style="left:134px;top:439.86px;width:78px;height:14.11px"><span style="left:38.9px;top:-1.23px">3444</span></div>
<div class="cell" style="left:213px;top:439.86px;width:77px;height:14.11px"><span style="left:38.3px;top:-1.23px">Bobby</span></div>
<div class="cell" style="left:291px;top:439.86px;width:77px;height:14.11px"><span style="left:38.6px;top:-1.23px">Rodgers</span></div>
<div class="cell" style="left:369px;top:439.86px;width:95px;height:14.11px"><span style="left:47.6px;top:-1.23px">Bobby Rodgers</span></div>
<div class="cell" style="left:465px;top:439.86px;width:77px;height:14.11px"><span style="left:38.4px;top:-1.23px">28-Nov-21</span></div>
<div class="cell" style="left:543px;top:439.86px;width:69px;height:14.11px"><span style="left:34.6px;top:-1.23px">NEL</span></div>
<div class="cell" style="left:613px;top:439.86px;width:64px;height:14.11px"><span style="left:32.0px;top:-1.23px">78623</span></div>
<div class="cell" style="left:678px;top:439.86px;width:125px;height:14.11px"><span style="left:62.4px;top:-1.23px">Matthew Jackson</span></div>
<div class="cell" style="left:804px;top:439.86px;width:22px;height:14.11px"><span style="left:38.5px;top:-1.23px">bobby.rodgers@bilearner.com</span></div>
<div class="cell" style="left:134px;top:454.97px;width:78px;height:14.11px"><span style="left:38.9px;top:-1.23px">3445</span></div>
<div class="cell" style="left:213px;top:454.97px;width:77px;height:14.11px"><span style="left:38.3px;top:-1.23px">Reid</span></div>
<div class="cell" style="left:291px;top:454.97px;width:77px;height:14.11px"><span style="left:38.6px;top:-1.23px">Park</span></div>
<div class="cell" style="left:369px;top:454.97px;width:95px;height:14.11px"><span style="left:47.6px;top:-1.23px">Reid Park</span></div>
<div class="cell" style="left:465px;top:454.97px;width:77px;height:14.11px"><span style="left:38.4px;top:-1.23px">16-Jan-21</span></div>
<div class="cell" style="left:543px;top:454.97px;width:69px;height:14.11px"><span style="left:34.6px;top:-1.23px">PL</span></div>
<div class="cell" style="left:613px;top:454.97px;width:64px;height:14.11px"><span style="left:32.0px;top:-1.23px">81953</span></div>
<div class="cell" style="left:678px;top:454.97px;width:125px;height:14.11px"><span style="left:62.4px;top:-1.23px">Michelle Mitchell</span></div>
<div class="cell" style="left:804px;top:454.97px;width:22px;height:14.11px"><span style="left:38.5px;top:-1.23px">reid.park@bilearner.com</span></div>
<div class="cell" style="left:134px;top:470.08px;width:78px;height:14.11px"><span style="left:38.9px;top:-1.23px">3446</span></div>
<div class="cell" style="left:213px;top:470.08px;width:77px;height:14.11px"><span style="left:38.3px;top:-1.23px">Hector</span></div>
<div class="cell" style="left:291px;top:470.08px;width:77px;height:14.11px"><span style="left:38.6px;top:-1.23px">Dalton</span></div>
<div class="cell" style="left:369px;top:470.08px;width:95px;height:14.11px"><span style="left:47.6px;top:-1.23px">Hector Dalton</span></div>
<div class="cell" style="left:465px;top:470.08px;width:77px;height:14.11px"><span style="left:38.4px;top:-1.23px">24-Aug-21</span></div>
<div class="cell" style="left:543px;top:470.08px;width:69px;height:14.11px"><span style="left:34.6px;top:-1.23px">BPC</span></div>
<div class="cell" style="left:613px;top:470.08px;width:64px;height:14.11px"><span style="left:32.0px;top:-1.23px">87539</span></div>
<div class="cell" style="left:678px;top:470.08px;width:125px;height:14.11px"><span style="left:62.4px;top:-1.23px">Sydney French</span></div>
<div class="cell" style="left:804px;top:470.08px;width:22px;height:14.11px"><span style="left:38.5px;top:-1.23px">hector.dalton@bilearner.com</span></div>
<div class="cell" style="left:134px;top:485.19px;width:78px;height:14.11px"><span style="left:38.9px;top:-1.23px">3447</span></div>
<div class="cell" style="left:213px;top:485.19px;width:77px;height:14.11px"><span style="left:38.3px;top:-1.23px">Mariela</span></div>
<div class="cell" style="left:291px;top:485.19px;width:77px;height:14.11px"><span style="left:38.6px;top:-1.23px">Schultz</span></div>
<div class="cell" style="left:369px;top:485.19px;width:95px;height:14.11px"><span style="left:47.6px;top:-1.23px">Mariela Schultz</span></div>
<div class="cell" style="left:465px;top:485.19px;width:77px;height:14.11px"><span style="left:38.4px;top:-1.23px">26-May-20</span></div>
<div class="cell" style="left:543px;top:485.19px;width:69px;height:14.11px"><span style="left:34.6px;top:-1.23px">CCDR</span></div>
<div class="cell" style="left:613px;top:485.19px;width:64px;height:14.11px"><span style="left:32.0px;top:-1.23px">79484</span></div>
<div class="cell" style="left:678px;top:485.19px;width:125px;height:14.11px"><span style="left:62.4px;top:-1.23px">Michelle Evans MD</span></div>
<div class="cell" style="left:804px;top:485.19px;width:22px;height:14.11px"><span style="left:38.5px;top:-1.23px">mariela.schultz@bilearner.com</span></div>
<div class="cell" style="left:134px;top:500.30px;width:78px;height:14.11px"><span style="left:38.9px;top:-1.23px">3448</span></div>
<div class="cell" style="left:213px;top:500.30px;width:77px;height:14.11px"><span style="left:38.3px;top:-1.23px">Angela</span></div>
<div class="cell" style="left:291px;top:500.30px;width:77px;height:14.11px"><span style="left:38.6px;top:-1.23px">Molina</span></div>
<div class="cell" style="left:369px;top:500.30px;width:95px;height:14.11px"><span style="left:47.6px;top:-1.23px">Angela Molina</span></div>
<div class="cell" style="left:465px;top:500.30px;width:77px;height:14.11px"><span style="left:38.4px;top:-1.23px">01-Oct-19</span></div>
<div class="cell" style="left:543px;top:500.30px;width:69px;height:14.11px"><span style="left:34.6px;top:-1.23px">SVG</span></div>
<div class="cell" style="left:613px;top:500.30px;width:64px;height:14.11px"><span style="left:32.0px;top:-1.23px">91042</span></div>
<div class="cell" style="left:678px;top:500.30px;width:125px;height:14.11px"><span style="left:62.4px;top:-1.23px">Patricia Cook</span></div>
<div class="cell" style="left:804px;top:500.30px;width:22px;height:14.11px"><span style="left:38.5px;top:-1.23px">angela.molina@bilearner.com</span></div>
<div class="cell" style="left:134px;top:515.41px;width:78px;height:14.11px"><span style="left:38.9px;top:-1.23px">3449</span></div>
<div class="cell" style="left:213px;top:515.41px;width:77px;height:14.11px"><span style="left:38.3px;top:-1.23px">Gerald</span></div>
<div class="cell" style="left:291px;top:515.41px;width:77px;height:14.11px"><span style="left:38.6px;top:-1.23px">Preston</span></div>
<div class="cell" style="left:369px;top:515.41px;width:95px;height:14.11px"><span style="left:47.6px;top:-1.23px">Gerald Preston</span></div>
<div class="cell" style="left:465px;top:515.41px;width:77px;height:14.11px"><span style="left:38.4px;top:-1.23px">10-May-23</span></div>
<div class="cell" style="left:543px;top:515.41px;width:69px;height:14.11px"><span style="left:34.6px;top:-1.23px">EW</span></div>
<div class="cell" style="left:613px;top:515.41px;width:64px;height:14.11px"><span style="left:32.0px;top:-1.23px">76495</span></div>
<div class="cell" style="left:678px;top:515.41px;width:125px;height:14.11px"><span style="left:62.4px;top:-1.23px">Ashley Reeves</span></div>
<div class="cell" style="left:804px;top:515.41px;width:22px;height:14.11px"><span style="left:38.5px;top:-1.23px">gerald.preston@bilearner.com</span></div>
<div class="cell" style="left:134px;top:530.52px;width:78px;height:14.11px"><span style="left:38.9px;top:-1.23px">3450</span></div>
<div class="cell" style="left:213px;top:530.52px;width:77px;height:14.11px"><span style="left:38.3px;top:-1.23px">Reilly</span></div>
<div class="cell" style="left:291px;top:530.52px;width:77px;height:14.11px"><span style="left:38.6px;top:-1.23px">Moyer</span></div>
<div class="cell" style="left:369px;top:530.52px;width:95px;height:14.11px"><span style="left:47.6px;top:-1.23px">Reilly Moyer</span></div>
<div class="cell" style="left:465px;top:530.52px;width:77px;height:14.11px"><span style="left:38.4px;top:-1.23px">01-Sep-20</span></div>
<div class="cell" style="left:543px;top:530.52px;width:69px;height:14.11px"><span style="left:34.6px;top:-1.23px">MSC</span></div>
<div class="cell" style="left:613px;top:530.52px;width:64px;height:14.11px"><span style="left:32.0px;top:-1.23px">64554</span></div>
<div class="cell" style="left:678px;top:530.52px;width:125px;height:14.11px"><span style="left:62.4px;top:-1.23px">Stanley Harvey</span></div>
<div class="cell" style="left:804px;top:530.52px;width:22px;height:14.11px"><span style="left:38.5px;top:-1.23px">reilly.moyer@bilearner.com</span></div>
<div class="cell" style="left:134px;top:545.63px;width:78px;height:14.11px"><span style="left:38.9px;top:-1.23px">3451</span></div>
<div class="cell" style="left:213px;top:545.63px;width:77px;height:14.11px"><span style="left:38.3px;top:-1.23px">Carlee</span></div>
<div class="cell" style="left:291px;top:545.63px;width:77px;height:14.11px"><span style="left:38.6px;top:-1.23px">French</span></div>
<div class="cell" style="left:369px;top:545.63px;width:95px;height:14.11px"><span style="left:47.6px;top:-1.23px">Carlee French</span></div>
<div class="cell" style="left:465px;top:545.63px;width:77px;height:14.11px"><span style="left:38.4px;top:-1.23px">18-Feb-21</span></div>
<div class="cell" style="left:543px;top:545.63px;width:69px;height:14.11px"><span style="left:34.6px;top:-1.23px">TNS</span></div>
<div class="cell" style="left:613px;top:545.63px;width:64px;height:14.11px"><span style="left:32.0px;top:-1.23px">64670</span></div>
<div class="cell" style="left:678px;top:545.63px;width:125px;height:14.11px"><span style="left:62.4px;top:-1.23px">Michael Bradshaw</span></div>
<div class="cell" style="left:804px;top:545.63px;width:22px;height:14.11px"><span style="left:38.5px;top:-1.23px">carlee.french@bilearner.com</span></div>
<div class="abs" style="left:0;top:559.7px;width:825px;height:10.6px;background:#e6e6e6"></div>
<svg class="abs" style="left:2px;top:560px" width="9" height="10" viewBox="0 0 9 10"><path d="M7 1 V8.8 L1.2 4.9 Z" fill="#8a8a8a"/></svg>
<div class="abs" style="left:791px;top:562px;width:40px;height:5.4px;background:#8f8f8f;border-radius:3px"></div>
<div class="abs" style="left:0;top:570.3px;width:825px;height:29px;background:#f5f5f5"></div>
<svg class="abs" style="left:9px;top:577px" width="40" height="14" viewBox="0 0 40 14"><path d="M7.4 2.4 L3.2 6.6 L7.4 10.8" fill="none" stroke="#c2c2c2" stroke-width="1.1" stroke-linecap="round" stroke-linejoin="round"/><path d="M31.6 2.4 L35.8 6.6 L31.6 10.8" fill="none" stroke="#c2c2c2" stroke-width="1.1" stroke-linecap="round" stroke-linejoin="round"/></svg>
<svg class="abs" style="left:64.8px;top:577px" width="14" height="14" viewBox="0 0 14 14"><path d="M1.6 2.6 H12 M1.6 6.6 H12 M1.6 10.6 H12" stroke="#424242" stroke-width="1.1" stroke-linecap="round"/></svg>
<div class="abs ui" style="left:93.3px;top:575.4px;line-height:16px;font-size:12.1px;letter-spacing:0.173px;color:#242424;-webkit-text-stroke:.35px #242424;">employee_data</div>
<div class="abs" style="left:93.3px;top:595.9px;width:85.4px;height:2.5px;background:#19703a;border-radius:1.2px"></div>
<svg class="abs" style="left:193px;top:577px" width="14" height="14" viewBox="0 0 14 14"><path d="M7 1.8 V11.4 M2.2 6.6 H11.8" stroke="#424242" stroke-width="1.1" stroke-linecap="round"/></svg>
<div class="abs" style="left:0;top:599.3px;width:825px;height:17.4px;background:#fff;border-top:1px solid #e6e6e6"></div>
<div class="abs ui" style="left:17.4px;top:602.9px;line-height:16px;font-size:10.6px;letter-spacing:0.006px;color:#6a6a6a;">Workbook Statistics</div>
<div class="abs" style="left:0;top:616.6px;width:825px;height:3px;background:#0a0a0a"></div>
</div></body></html>
